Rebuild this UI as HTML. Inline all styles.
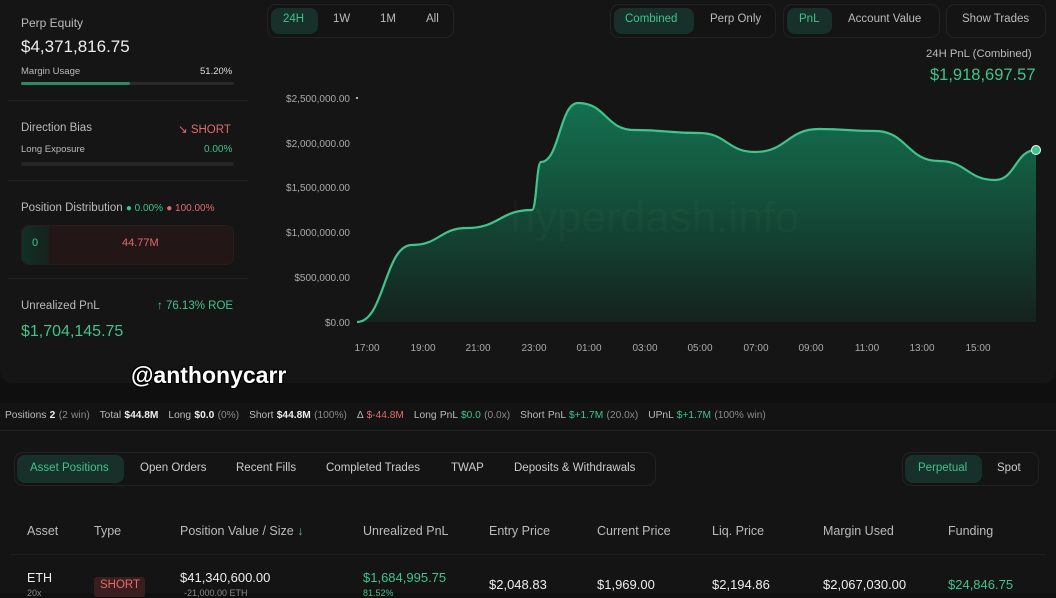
<!DOCTYPE html>
<html><head><meta charset="utf-8"><style>
*{margin:0;padding:0;box-sizing:border-box}
body{width:1056px;height:593px;overflow:hidden;background:#0f0f0f;font-family:"Liberation Sans",sans-serif;color:#ddd;position:relative}
.a{position:absolute;white-space:nowrap}
.g{color:#3ec48c}.r{color:#e46a6a}.m{color:#8a8a8a}.w{color:#eee}
.seg{position:absolute;border:1px solid #222;border-radius:9px;background:#141414;height:34px}
.on{position:absolute;background:#17302a;border-radius:8px;color:#3ec48c}
</style></head><body>
<div class="a" style="left:0;top:0;width:1056px;height:383px;background:#151515;border-radius:0 0 12px 12px"></div>
<div class="a" style="left:0;top:403px;width:1056px;height:28px;background:#131313;border-bottom:1px solid #222"></div>
<div class="a" style="left:0;top:431px;width:1056px;height:162px;background:#141414"></div>

<!-- left panel -->
<div class="a" style="left:21px;top:16px;font-size:12px;color:#bbb">Perp Equity</div>
<div class="a w" style="left:21px;top:37px;font-size:17px">$4,371,816.75</div>
<div class="a" style="left:21px;top:66px;font-size:9.5px;color:#bbb">Margin Usage</div>
<div class="a" style="left:200px;top:66px;font-size:9.5px;color:#ddd">51.20%</div>
<div class="a" style="left:21px;top:82px;width:213px;height:3px;background:#2a2a2a;border-radius:2px"><div style="width:109px;height:3px;background:#2f8a62;border-radius:2px"></div></div>
<div class="a" style="left:8px;top:100px;width:240px;height:1px;background:#222"></div>
<div class="a" style="left:21px;top:122px;font-size:11.5px;color:#bbb">Direction Bias</div>
<div class="a r" style="left:178px;top:122px;font-size:11.5px">↘ SHORT</div>
<div class="a" style="left:21px;top:144px;font-size:9.5px;color:#bbb">Long Exposure</div>
<div class="a g" style="left:204px;top:144px;font-size:10px">0.00%</div>
<div class="a" style="left:21px;top:162px;width:213px;height:4px;background:#262626;border-radius:2px"></div>
<div class="a" style="left:8px;top:180px;width:240px;height:1px;background:#222"></div>
<div class="a" style="left:21px;top:202px;font-size:11.5px;color:#bbb">Position Distribution <span class="g" style="font-size:10px">● 0.00%</span> <span class="r" style="font-size:10px">● 100.00%</span></div>
<div class="a" style="left:21px;top:225px;width:213px;height:40px;background:#221616;border-radius:8px;border:1px solid #2a1d1d;overflow:hidden">
<div style="position:absolute;left:0;top:0;width:27px;height:40px;background:linear-gradient(90deg,#0f3026,#18211d)"></div>
<div class="a g" style="left:10px;top:11px;font-size:11px">0</div>
<div class="a r" style="left:100px;top:11px;font-size:11px">44.77M</div></div>
<div class="a" style="left:8px;top:278px;width:240px;height:1px;background:#222"></div>
<div class="a" style="left:21px;top:300px;font-size:11.5px;color:#bbb">Unrealized PnL</div>
<div class="a g" style="left:157px;top:300px;font-size:11.5px">↑ 76.13% ROE</div>
<div class="a g" style="left:21px;top:323px;font-size:16px">$1,704,145.75</div>
<div class="a" style="left:131px;top:362px;font-size:23px;font-weight:bold;color:#fff;text-shadow:1px 1px 0 #000,-1px -1px 0 #000,1px -1px 0 #000,-1px 1px 0 #000">@anthonycarr</div>

<!-- top segs -->
<div class="seg" style="left:267px;top:4px;width:187px"><div class="on" style="left:3px;top:3px;width:47px;height:26px"></div></div>
<div class="a g" style="left:283px;top:13px;font-size:11.5px">24H</div>
<div class="a" style="left:333px;top:13px;font-size:11.5px;color:#bbb">1W</div>
<div class="a" style="left:380px;top:13px;font-size:11.5px;color:#bbb">1M</div>
<div class="a" style="left:426px;top:13px;font-size:11.5px;color:#bbb">All</div>
<div class="seg" style="left:610px;top:4px;width:166px"><div class="on" style="left:3px;top:3px;width:80px;height:26px"></div></div>
<div class="a g" style="left:625px;top:13px;font-size:11.5px">Combined</div>
<div class="a" style="left:710px;top:13px;font-size:11.5px;color:#bbb">Perp Only</div>
<div class="seg" style="left:783px;top:4px;width:157px"><div class="on" style="left:3px;top:3px;width:45px;height:26px"></div></div>
<div class="a g" style="left:799px;top:13px;font-size:11.5px">PnL</div>
<div class="a" style="left:848px;top:13px;font-size:11.5px;color:#bbb">Account Value</div>
<div class="seg" style="left:946px;top:4px;width:100px"></div>
<div class="a" style="left:962px;top:13px;font-size:11.5px;color:#bbb">Show Trades</div>
<div class="a" style="left:926px;top:48px;font-size:11.3px;color:#bbb">24H PnL (Combined)</div>
<div class="a g" style="left:930px;top:66px;font-size:16.5px">$1,918,697.57</div>

<!-- chart -->
<svg class="a" style="left:0;top:0" width="1056" height="383">
<defs><linearGradient id="gr" x1="0" y1="0" x2="0" y2="1"><stop offset="0" stop-color="#137553" stop-opacity=".95"/><stop offset="1" stop-color="#15221d"/></linearGradient></defs>
<g font-family="Liberation Sans" font-size="10" fill="#aaa" text-anchor="end">
<text x="350" y="102">$2,500,000.00</text><text x="350" y="147">$2,000,000.00</text><text x="350" y="191">$1,500,000.00</text><text x="350" y="236">$1,000,000.00</text><text x="350" y="281">$500,000.00</text><text x="350" y="326">$0.00</text></g>
<g font-family="Liberation Sans" font-size="10" fill="#aaa" text-anchor="middle">
<text x="367" y="351">17:00</text><text x="423" y="351">19:00</text><text x="478" y="351">21:00</text><text x="534" y="351">23:00</text><text x="589" y="351">01:00</text><text x="645" y="351">03:00</text><text x="700" y="351">05:00</text><text x="756" y="351">07:00</text><text x="811" y="351">09:00</text><text x="867" y="351">11:00</text><text x="922" y="351">13:00</text><text x="978" y="351">15:00</text></g>
<circle cx="357" cy="98" r="1" fill="#ddd"/>
<path fill="url(#gr)" d="M357 322 C384.5 322 384.5 245 412 245 C439.5 245 439.5 228 467 228 C499.5 228 499.5 210 532 210 C536.5 210 536.5 162 541 162 C559.5 162 559.5 103 578 103 C606 103 606 130 634 130 C666.5 130 666.5 133 699 133 C727 133 727 152 755 152 C787 152 787 129 819 129 C847 129 847 131 875 131 C907 131 907 161 939 161 C967 161 967 180 995 180 C1015.5 180 1015.5 150 1036 150 L1036 322 Z"/>
<text x="655" y="232" font-family="Liberation Sans" font-size="44" fill="#fff" fill-opacity=".025" text-anchor="middle">hyperdash.info</text>
<path fill="none" stroke="#3ec48c" stroke-width="2.2" d="M357 322 C384.5 322 384.5 245 412 245 C439.5 245 439.5 228 467 228 C499.5 228 499.5 210 532 210 C536.5 210 536.5 162 541 162 C559.5 162 559.5 103 578 103 C606 103 606 130 634 130 C666.5 130 666.5 133 699 133 C727 133 727 152 755 152 C787 152 787 129 819 129 C847 129 847 131 875 131 C907 131 907 161 939 161 C967 161 967 180 995 180 C1015.5 180 1015.5 150 1036 150"/>
<circle cx="1036" cy="150" r="4.5" fill="#3ec48c" stroke="#fff" stroke-width="1"/>
</svg>

<!-- stats strip -->
<div class="a" style="left:5px;top:410px;font-size:10.2px;color:#bbb;word-spacing:0.5px">Positions <b class="w">2</b> <span class="m">(2 win)</span> &nbsp; Total <b class="w">$44.8M</b> &nbsp; Long <b class="w">$0.0</b> <span class="m">(0%)</span> &nbsp; Short <b class="w">$44.8M</b> <span class="m">(100%)</span> &nbsp; Δ <span class="r">$-44.8M</span> &nbsp; Long PnL <span class="g">$0.0</span> <span class="m">(0.0x)</span> &nbsp; Short PnL <span class="g">$+1.7M</span> <span class="m">(20.0x)</span> &nbsp; UPnL <span class="g">$+1.7M</span> <span class="m">(100% win)</span></div>

<!-- tabs -->
<div class="seg" style="left:14px;top:452px;width:642px;height:34px"><div class="on" style="left:2px;top:2px;width:107px;height:28px"></div></div>
<div class="a g" style="left:30px;top:462px;font-size:11.5px">Asset Positions</div>
<div class="a" style="left:140px;top:462px;font-size:11.5px;color:#ccc">Open Orders</div>
<div class="a" style="left:236px;top:462px;font-size:11.5px;color:#ccc">Recent Fills</div>
<div class="a" style="left:326px;top:462px;font-size:11.5px;color:#ccc">Completed Trades</div>
<div class="a" style="left:451px;top:462px;font-size:11.5px;color:#ccc">TWAP</div>
<div class="a" style="left:514px;top:462px;font-size:11.5px;color:#ccc">Deposits &amp; Withdrawals</div>
<div class="seg" style="left:902px;top:452px;width:137px;height:34px"><div class="on" style="left:2px;top:2px;width:77px;height:28px"></div></div>
<div class="a g" style="left:918px;top:462px;font-size:11.5px">Perpetual</div>
<div class="a" style="left:997px;top:462px;font-size:11.5px;color:#ccc">Spot</div>

<!-- table -->
<div class="a" style="top:524px;left:0;width:1056px;font-size:12.5px;color:#bbb">
<span class="a" style="left:27px">Asset</span><span class="a" style="left:94px">Type</span><span class="a" style="left:180px">Position Value / Size <span class="g">↓</span></span><span class="a" style="left:363px">Unrealized PnL</span><span class="a" style="left:489px">Entry Price</span><span class="a" style="left:597px">Current Price</span><span class="a" style="left:712px">Liq. Price</span><span class="a" style="left:823px">Margin Used</span><span class="a" style="left:948px">Funding</span></div>
<div class="a" style="left:10px;top:554px;width:1036px;height:1px;background:#1f1f1f"></div>
<div class="a w" style="left:27px;top:571px;font-size:12.5px">ETH</div>
<div class="a m" style="left:27px;top:588px;font-size:9px">20x</div>
<div class="a r" style="left:94px;top:577px;width:51px;height:20px;background:#3a1e1e;border-radius:3px;font-size:11.5px;padding:2px 0 0 6px">SHORT</div>
<div class="a w" style="left:180px;top:570px;font-size:13px">$41,340,600.00</div>
<div class="a m" style="left:184px;top:588px;font-size:9px">-21,000.00 ETH</div>
<div class="a g" style="left:363px;top:570px;font-size:13px">$1,684,995.75</div>
<div class="a g" style="left:363px;top:588px;font-size:9px">81.52%</div>
<div class="a w" style="left:489px;top:577px;font-size:13px">$2,048.83</div>
<div class="a w" style="left:597px;top:577px;font-size:13px">$1,969.00</div>
<div class="a w" style="left:712px;top:577px;font-size:13px">$2,194.86</div>
<div class="a w" style="left:823px;top:577px;font-size:13px">$2,067,030.00</div>
<div class="a g" style="left:948px;top:577px;font-size:13px">$24,846.75</div>
</body></html>
